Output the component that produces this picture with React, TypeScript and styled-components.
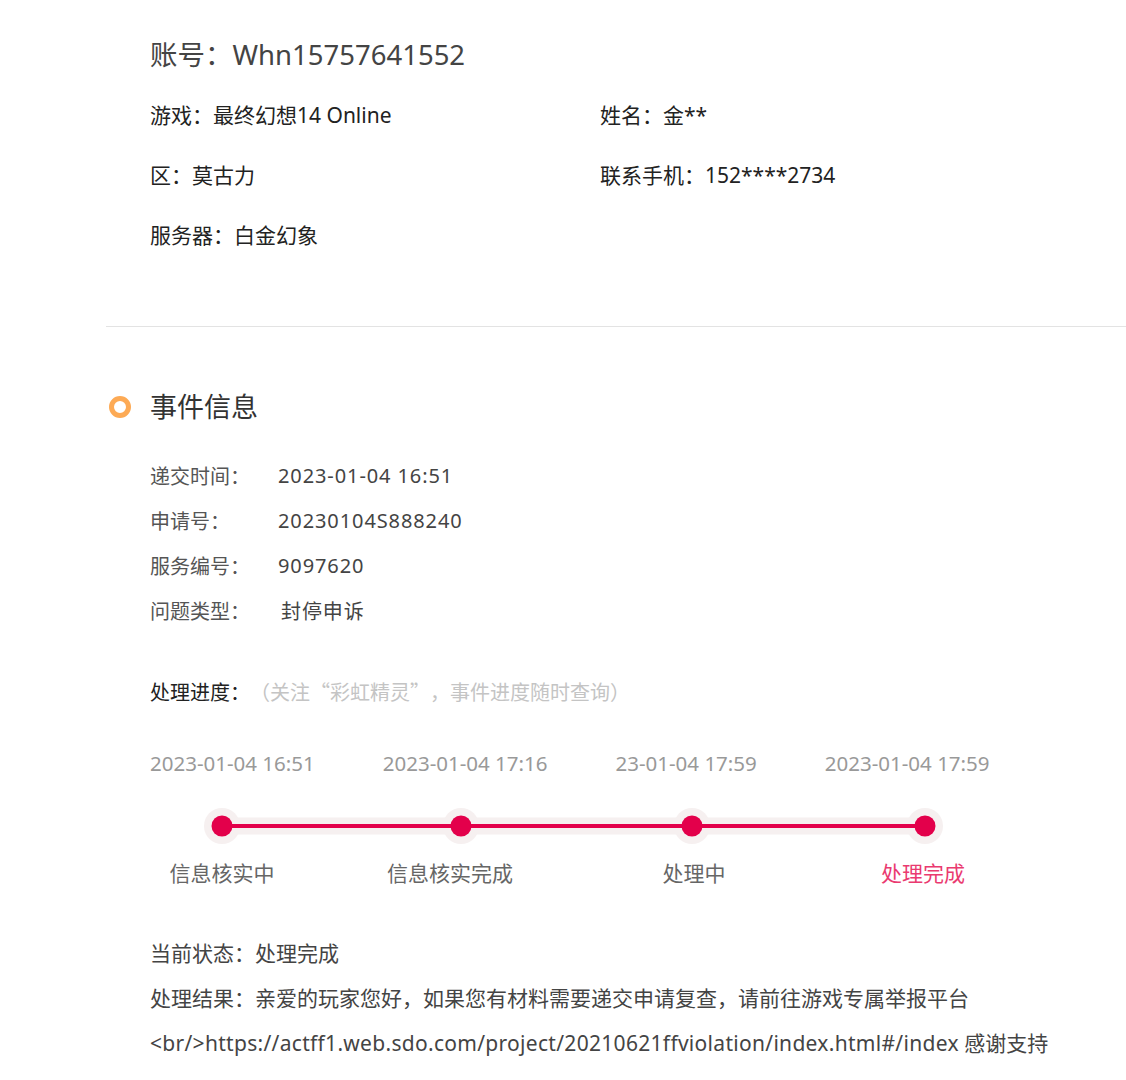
import React from "react";
import styled, { createGlobalStyle } from "styled-components";

const GlobalStyle = createGlobalStyle`
  html, body {
    margin: 0;
    padding: 0;
    background: #ffffff;
  }
  body {
    font-family: "Noto Sans", "Noto Sans CJK SC", sans-serif;
    color: #333333;
    text-spacing-trim: space-all;
  }
`;

const infoRows = [
  { label: "递交时间：", value: "2023-01-04 16:51" },
  { label: "申请号：", value: "20230104S888240" },
  { label: "服务编号：", value: "9097620" },
  { label: "问题类型：", value: "封停申诉", indent: true },
];

const steps = [
  { time: "2023-01-04 16:51", name: "信息核实中" },
  { time: "2023-01-04 17:16", name: "信息核实完成" },
  { time: "23-01-04 17:59", name: "处理中" },
  { time: "2023-01-04 17:59", name: "处理完成" },
];

// x of each dot inside the track drawing
const dotX = [116, 355, 586, 819];

const App: React.FC = () => {
  return (
    <Page>
      <GlobalStyle />
      <AccountSection>
        <AccountTitle>账号：Whn15757641552</AccountTitle>
        <AccountGrid>
          <AccountItem>游戏：最终幻想14 Online</AccountItem>
          <AccountItem>姓名：金**</AccountItem>
          <AccountItem>区：莫古力</AccountItem>
          <AccountItem>联系手机：152****2734</AccountItem>
          <AccountItem>服务器：白金幻象</AccountItem>
        </AccountGrid>
      </AccountSection>

      <EventSection>
        <SectionHeader>
          <RingIcon />
          <SectionTitle>事件信息</SectionTitle>
        </SectionHeader>

        <InfoList>
          {infoRows.map((row) => (
            <InfoRow key={row.label}>
              <InfoLabel>{row.label}</InfoLabel>
              <InfoValue $indent={row.indent}>{row.value}</InfoValue>
            </InfoRow>
          ))}
        </InfoList>

        <ProgressHeading>
          处理进度：<ProgressHint>（关注“彩虹精灵”，事件进度随时查询）</ProgressHint>
        </ProgressHeading>

        <DateRow>
          {steps.map((step) => (
            <StepDate key={step.name}>{step.time}</StepDate>
          ))}
        </DateRow>

        <Track viewBox="0 0 920 40" width={920} height={40}>
          <rect x={dotX[0]} y={11.5} width={dotX[3] - dotX[0]} height={17} fill="#f6f0f0" />
          {dotX.map((x) => (
            <circle key={`halo-${x}`} cx={x} cy={20} r={18} fill="#f6f0f0" />
          ))}
          <rect x={dotX[0]} y={18} width={dotX[3] - dotX[0]} height={4} fill="#e3004b" />
          {dotX.map((x) => (
            <circle key={`dot-${x}`} cx={x} cy={20} r={10.5} fill="#e3004b" />
          ))}
        </Track>

        <StepLabels>
          {steps.map((step, i) => (
            <StepName key={step.name} $done={i === steps.length - 1}>
              {step.name}
            </StepName>
          ))}
        </StepLabels>

        <ResultBlock>
          <ResultLine>当前状态：处理完成</ResultLine>
          <ResultLine>
            处理结果：亲爱的玩家您好，如果您有材料需要递交申请复查，请前往游戏专属举报平台
            <br />
            <UrlText>
              {"<br/>https://actff1.web.sdo.com/project/20210621ffviolation/index.html#/index"}
            </UrlText>{" "}
            感谢支持
          </ResultLine>
        </ResultBlock>
      </EventSection>
    </Page>
  );
};

const Page = styled.main`
  margin-left: 106px;
  width: 1020px;
`;

const AccountSection = styled.section`
  padding: 35px 0 61px 44px;
  border-bottom: 1px solid #e3e3e3;
`;

const AccountTitle = styled.h1`
  margin: 0;
  font-size: 27.5px;
  font-weight: 400;
  line-height: 40px;
  color: #444444;
`;

const AccountGrid = styled.div`
  margin-top: 10px;
  display: grid;
  grid-template-columns: 450px 1fr;
  grid-auto-rows: 60px;
`;

const AccountItem = styled.div`
  font-size: 21px;
  line-height: 60px;
  color: #222222;
`;

const EventSection = styled.section`
  padding-top: 60px;
  padding-bottom: 20px;
`;

const SectionHeader = styled.div`
  display: flex;
  align-items: center;
  gap: 19px;
  padding-left: 3px;
  height: 40px;
`;

const RingIcon = styled.span`
  box-sizing: border-box;
  width: 22px;
  height: 22px;
  border: 5px solid #fdaa55;
  border-radius: 50%;
`;

const SectionTitle = styled.h2`
  margin: 0;
  font-size: 27px;
  font-weight: 400;
  line-height: 40px;
  color: #333333;
`;

const InfoList = styled.div`
  margin-top: 26px;
  padding-left: 44px;
`;

const InfoRow = styled.div`
  display: flex;
  height: 45px;
  align-items: center;
`;

const InfoLabel = styled.span`
  width: 128px;
  font-size: 20px;
  color: #555555;
`;

const InfoValue = styled.span<{ $indent?: boolean }>`
  padding-left: ${({ $indent }) => ($indent ? "3px" : "0")};
  font-size: 20px;
  letter-spacing: 0.9px;
  color: #444444;
`;

const ProgressHeading = styled.div`
  margin-top: 36px;
  padding-left: 44px;
  font-size: 20px;
  line-height: 45px;
  color: #222222;
`;

const ProgressHint = styled.span`
  font-family: "Noto Sans CJK SC", sans-serif;
  color: #c4c4c4;
`;

const DateRow = styled.div`
  margin-top: 33px;
  padding-left: 44px;
  display: flex;
  gap: 68px;
`;

const StepDate = styled.span`
  font-size: 20.5px;
  line-height: 30px;
  color: #999999;
`;

const Track = styled.svg`
  display: block;
  margin-top: 28px;
`;

const StepLabels = styled.div`
  margin-top: 12px;
  display: grid;
  grid-template-columns: 232px 224px 264px 194px;
`;

const StepName = styled.span<{ $done?: boolean }>`
  text-align: center;
  font-size: 21px;
  line-height: 30px;
  color: ${({ $done }) => ($done ? "#ea3a70" : "#666666")};
`;

const ResultBlock = styled.div`
  margin-top: 43px;
  padding-left: 44px;
`;

const ResultLine = styled.p`
  margin: 0;
  font-size: 21px;
  line-height: 45px;
  color: #444444;
`;

const UrlText = styled.span`
  letter-spacing: 0.3px;
`;

export default App;
